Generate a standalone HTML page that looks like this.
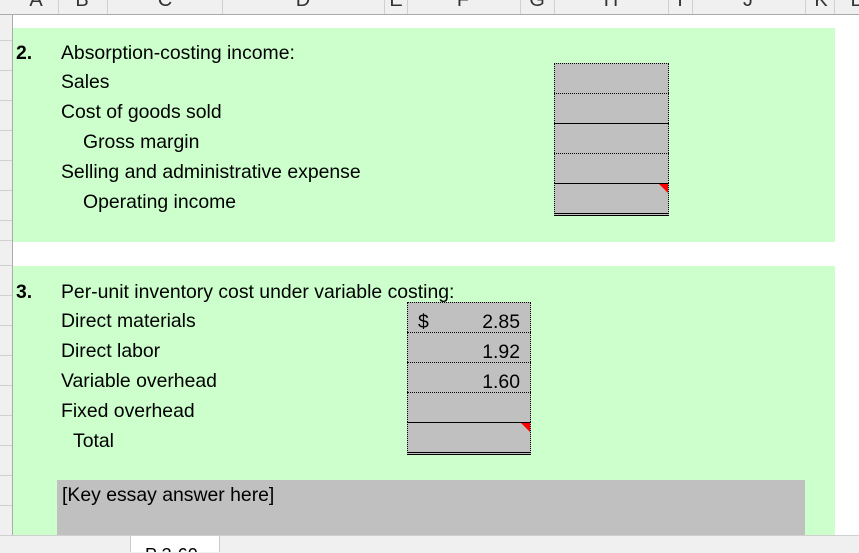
<!DOCTYPE html>
<html><head><style>
body{margin:0;width:859px;height:552px;overflow:hidden;background:#fff;position:relative;font-family:"Liberation Sans",Arial,sans-serif;}
.a{position:absolute}
.t{position:absolute;font-size:19.4px;color:#000;line-height:22px;white-space:nowrap}
.hdr{position:absolute;top:0;left:0;width:859px;height:14px;background:#f0f0f0;border-bottom:1px solid #ababab;overflow:hidden}
.hl{position:absolute;top:0;height:14px;width:1px;background:#d0d0d0}
.hc{position:absolute;top:-11px;font-size:20px;color:#333;width:20px;text-align:center}
.rh{position:absolute;left:0;top:15px;width:12px;height:520px;background:#f0f0f0;border-right:1px solid #ababab}
.rl{position:absolute;left:0;width:12px;height:1px;background:#d0d0d0}
.cell{position:absolute;background:#c0c0c0;box-sizing:border-box}
.dot{border-top:1px dotted #000}
.tri{position:absolute;right:0;top:0;width:0;height:0;border-top:9px solid #f00;border-left:9px solid transparent}
</style></head><body>
<div class="hdr">
<div class="hl" style="left:58px"></div><div class="hl" style="left:107px"></div><div class="hl" style="left:222px"></div><div class="hl" style="left:384px"></div><div class="hl" style="left:407px"></div><div class="hl" style="left:520px"></div><div class="hl" style="left:554px"></div><div class="hl" style="left:668px"></div><div class="hl" style="left:692px"></div><div class="hl" style="left:805px"></div><div class="hl" style="left:834px"></div>
<div class="hc" style="left:26px">A</div><div class="hc" style="left:72px">B</div><div class="hc" style="left:155px">C</div><div class="hc" style="left:293px">D</div><div class="hc" style="left:386px">E</div><div class="hc" style="left:453px">F</div><div class="hc" style="left:527px">G</div><div class="hc" style="left:601px">H</div><div class="hc" style="left:670px">I</div><div class="hc" style="left:738px">J</div><div class="hc" style="left:811px">K</div><div class="hc" style="left:846px">L</div>
</div>
<div class="rh">
<div class="rl" style="top:25px"></div><div class="rl" style="top:55px"></div><div class="rl" style="top:85px"></div><div class="rl" style="top:115px"></div><div class="rl" style="top:145px"></div><div class="rl" style="top:175px"></div><div class="rl" style="top:205px"></div><div class="rl" style="top:225px"></div><div class="rl" style="top:250px"></div><div class="rl" style="top:280px"></div><div class="rl" style="top:310px"></div><div class="rl" style="top:340px"></div><div class="rl" style="top:370px"></div><div class="rl" style="top:400px"></div><div class="rl" style="top:430px"></div><div class="rl" style="top:460px"></div><div class="rl" style="top:490px"></div>
</div>
<div class="a" style="left:13px;top:28px;width:822px;height:214px;background:#ccffcc"></div>
<div class="a" style="left:13px;top:266px;width:822px;height:269px;background:#ccffcc"></div>

<div class="t" style="left:16px;top:42px;font-weight:bold">2.</div>
<div class="t" style="left:61px;top:42px">Absorption-costing income:</div>
<div class="t" style="left:61px;top:71px">Sales</div>
<div class="t" style="left:61px;top:101px">Cost of goods sold</div>
<div class="t" style="left:83px;top:131px">Gross margin</div>
<div class="t" style="left:61px;top:161px">Selling and administrative expense</div>
<div class="t" style="left:83px;top:191px">Operating income</div>

<div class="cell dot" style="left:554px;top:63px;width:115px;height:30px;border-left:1px dotted #000;border-right:1px dotted #000"></div>
<div class="cell dot" style="left:554px;top:93px;width:115px;height:30px;border-left:1px dotted #000;border-right:1px dotted #000"></div>
<div class="cell" style="left:554px;top:123px;width:115px;height:30px;border-top:1px solid #000;border-left:1px dotted #000;border-right:1px dotted #000"></div>
<div class="cell dot" style="left:554px;top:153px;width:115px;height:30px;border-left:1px dotted #000;border-right:1px dotted #000"></div>
<div class="cell" style="left:554px;top:183px;width:115px;height:33px;border-top:1px solid #000;border-bottom:3px double #000;border-left:1px dotted #000;border-right:1px dotted #000"><div class="tri"></div></div>

<div class="t" style="left:16px;top:281px;font-weight:bold">3.</div>
<div class="t" style="left:61px;top:281px">Per-unit inventory cost under variable costing:</div>
<div class="t" style="left:61px;top:310px">Direct materials</div>
<div class="t" style="left:61px;top:340px">Direct labor</div>
<div class="t" style="left:61px;top:370px">Variable overhead</div>
<div class="t" style="left:61px;top:400px">Fixed overhead</div>
<div class="t" style="left:73px;top:430px">Total</div>

<div class="cell dot" style="left:407px;top:302px;width:124px;height:30px;border-left:1px dotted #000;border-right:1px dotted #000"></div>
<div class="cell dot" style="left:407px;top:332px;width:124px;height:30px;border-left:1px dotted #000;border-right:1px dotted #000"></div>
<div class="cell dot" style="left:407px;top:362px;width:124px;height:30px;border-left:1px dotted #000;border-right:1px dotted #000"></div>
<div class="cell dot" style="left:407px;top:392px;width:124px;height:30px;border-left:1px dotted #000;border-right:1px dotted #000"></div>
<div class="cell" style="left:407px;top:422px;width:124px;height:33px;border-top:1px solid #000;border-bottom:3px double #000;border-left:1px dotted #000;border-right:1px dotted #000"><div class="tri"></div></div>
<div class="t" style="left:418px;top:311px">$</div>
<div class="t" style="left:470px;top:311px;width:50px;text-align:right">2.85</div>
<div class="t" style="left:470px;top:341px;width:50px;text-align:right">1.92</div>
<div class="t" style="left:470px;top:371px;width:50px;text-align:right">1.60</div>

<div class="a" style="left:57px;top:480px;width:748px;height:55px;background:#c0c0c0"></div>
<div class="t" style="left:62px;top:484px">[Key essay answer here]</div>

<div class="a" style="left:0;top:535px;width:859px;height:17px;background:#f0f0f0;border-top:1px solid #d0d0d0"></div>
<div class="a" style="left:130px;top:536px;width:88px;height:16px;background:#fff;border-left:1px solid #ccc;border-right:1px solid #ccc;overflow:hidden"><div class="t" style="left:14px;top:8px;font-size:18px">P 3-60</div></div>
</body></html>
